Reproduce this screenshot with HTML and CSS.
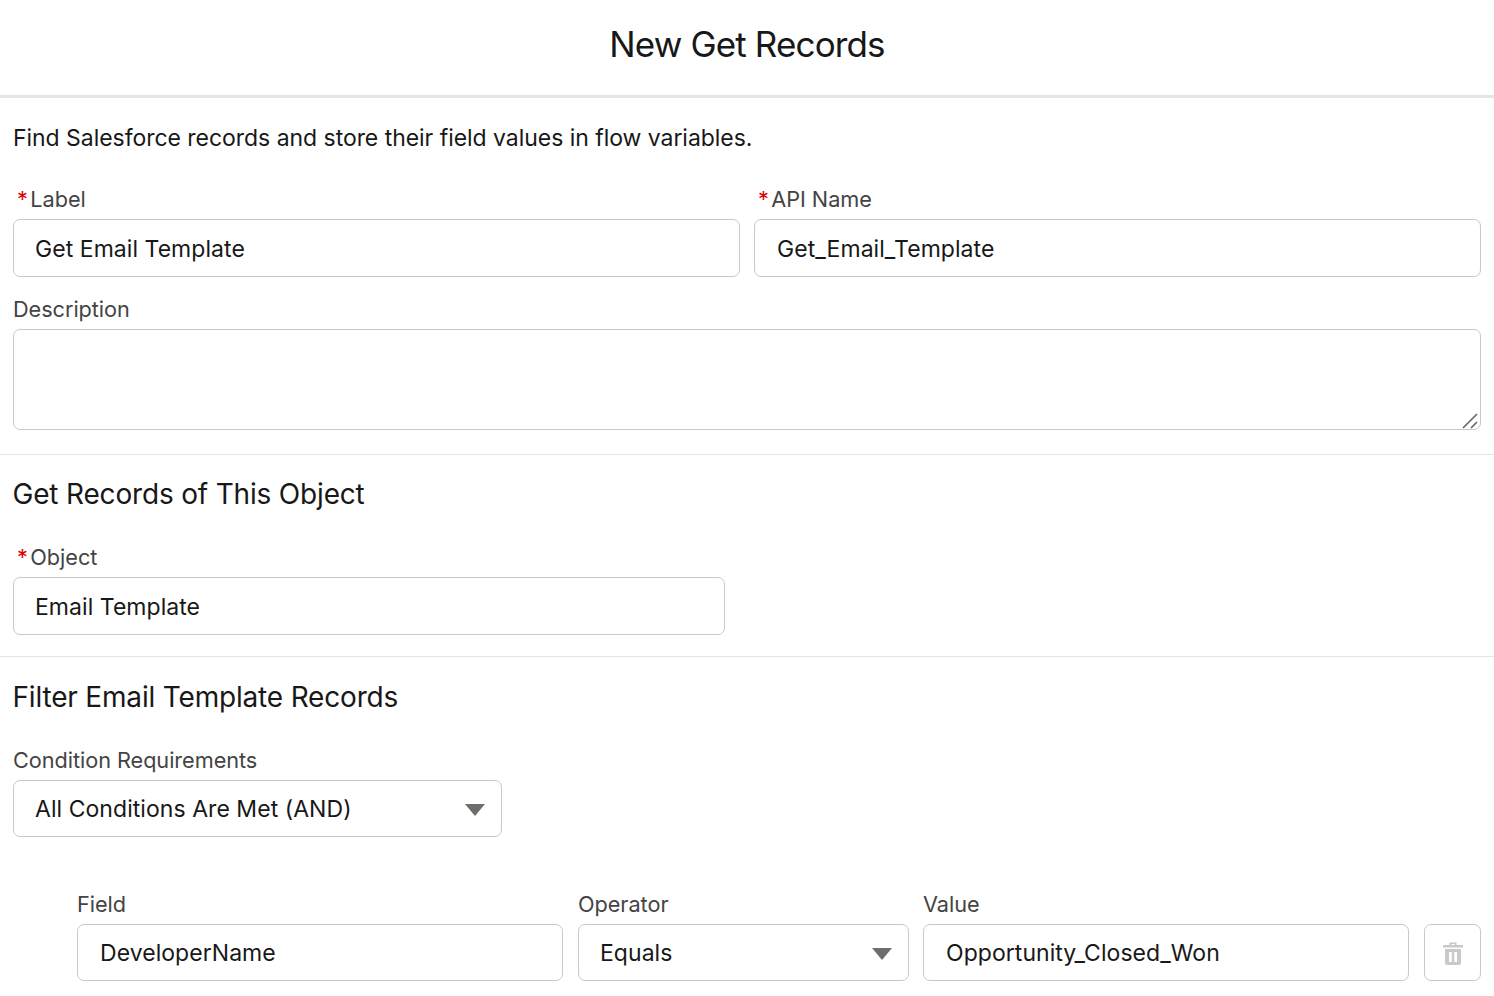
FILE: index.html
```html
<!DOCTYPE html>
<html lang="en">
<head>
    <meta charset="UTF-8">
    <meta name="viewport" content="width=device-width, initial-scale=1.0">
    <title>New Get Records</title>
    <link rel="stylesheet" href="styles.css">
</head>
<body>
    <header class="modal-header">
        <h1>New Get Records</h1>
    </header>

    <section class="section section-intro">
        <p class="intro">Find Salesforce records and store their field values in flow variables.</p>
        <div class="row-two">
            <div class="field">
                <label><span class="req">*</span>Label</label>
                <div class="input input-first">Get Email Template</div>
            </div>
            <div class="field">
                <label><span class="req">*</span>API Name</label>
                <div class="input">Get_Email_Template</div>
            </div>
        </div>
        <div class="field field-desc">
            <label>Description</label>
            <div class="textarea">
                <svg class="grip" width="18" height="16" viewBox="0 0 18 16">
                    <path d="M1 15 L15 1 M9 15 L15 9" stroke="#666" stroke-width="1.6" fill="none"/>
                </svg>
            </div>
        </div>
    </section>

    <section class="section section-object">
        <h2>Get Records of This Object</h2>
        <div class="field field-object">
            <label><span class="req">*</span>Object</label>
            <div class="input input-first">Email Template</div>
        </div>
    </section>

    <section class="section section-filter">
        <h2>Filter Email Template Records</h2>
        <div class="field field-cond">
            <label>Condition Requirements</label>
            <div class="input input-first select">All Conditions Are Met (AND)<span class="caret"></span></div>
        </div>
        <div class="condition">
            <div class="field col-field">
                <label>Field</label>
                <div class="input">DeveloperName</div>
            </div>
            <div class="field col-op">
                <label>Operator</label>
                <div class="input input-first select">Equals<span class="caret"></span></div>
            </div>
            <div class="field col-value">
                <label>Value</label>
                <div class="input">Opportunity_Closed_Won</div>
            </div>
            <div class="trash-btn">
                <svg class="trash-icon" width="20" height="23" viewBox="0 0 20 23">
                    <path fill="#c9c9c9" d="M6.5 0.5 H13.5 V3 H20 V5.5 H0 V3 H6.5 Z M8.4 2 V3 H11.6 V2 Z"/>
                    <path fill="#c9c9c9" fill-rule="evenodd" d="M2 7 H18 V21 Q18 23 16 23 H4 Q2 23 2 21 Z M6 10 V20 H8.8 V10 Z M11.2 10 V20 H14 V10 Z"/>
                </svg>
            </div>
        </div>
    </section>
</body>
</html>
```

FILE: styles.css
```css
* {
    box-sizing: border-box;
}
body {
    font-family: Inter, "Liberation Sans", sans-serif;
    margin: 0;
    height: 996px;
    overflow: hidden;
    color: #181818;
    background: #fff;
}
.modal-header {
    height: 98px;
    border-bottom: 3px solid #e5e5e5;
    padding-top: 22px;
    text-align: center;
}
h1 {
    font-size: 35px;
    line-height: 44px;
    font-weight: 400;
    margin: 0;
    letter-spacing: -0.87px;
}
h2 {
    font-size: 28px;
    line-height: 36px;
    font-weight: 400;
    margin: 0 0 0 -0.5px;
    letter-spacing: -0.18px;
}
.section {
    padding: 0 13px;
    border-bottom: 1px solid #e5e5e5;
}
.section-intro {
    height: 357px;
    padding-top: 26px;
}
.intro {
    font-size: 23px;
    line-height: 28px;
    margin: 0 0 33px;
    letter-spacing: -0.04px;
}
.section-object {
    height: 202px;
    padding-top: 21px;
}
.section-filter {
    border-bottom: none;
    padding-top: 22px;
}
.row-two {
    display: flex;
    gap: 14px;
}
.row-two .field {
    flex: 1;
}
label {
    display: block;
    font-size: 21.7px;
    line-height: 28px;
    height: 34px;
    color: #444;
    letter-spacing: -0.05px;
}
.req {
    color: #e00000;
    margin: 0 2.5px 0 4px;
}
.input {
    height: 58px;
    border: 1px solid #c9c9c9;
    border-radius: 7px;
    padding: 0 22px;
    font-size: 23px;
    line-height: 58px;
    letter-spacing: 0.05px;
    white-space: nowrap;
    position: relative;
}
.input-first {
    padding: 0 21px;
}
.field-desc {
    margin-top: 18px;
}
.textarea {
    height: 101px;
    border: 1px solid #c9c9c9;
    border-radius: 7px;
    position: relative;
}
.grip {
    position: absolute;
    right: 0;
    bottom: 0;
}
.field-object {
    width: 712px;
    margin-top: 31px;
}
.field-cond {
    width: 489px;
    margin-top: 31px;
}
.field-cond .input,
.condition .input {
    height: 57px;
    line-height: 56px;
}
.caret {
    position: absolute;
    right: 16px;
    top: 23px;
    width: 0;
    height: 0;
    border-left: 10px solid transparent;
    border-right: 10px solid transparent;
    border-top: 12px solid #706e6b;
}
.condition {
    display: flex;
    align-items: flex-end;
    margin: 53px 0 0 64px;
}
.col-field {
    width: 486px;
    margin-right: 15px;
}
.col-op {
    width: 331px;
    margin-right: 14px;
}
.col-value {
    width: 486px;
    margin-right: 15px;
}
.trash-btn {
    width: 57px;
    height: 57px;
    border: 1px solid #c9c9c9;
    border-radius: 7px;
    display: flex;
    align-items: center;
    justify-content: center;
}
.trash-icon {
    margin-top: 2px;
}
```
